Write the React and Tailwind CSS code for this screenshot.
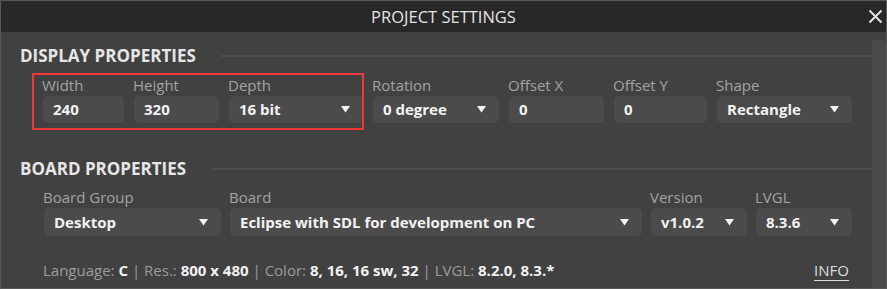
import React from "react";

const font = { fontFamily: '"Open Sans", "Noto Sans", sans-serif' };

function Caret() {
  return (
    <svg width="9" height="7" viewBox="0 0 9 7" className="shrink-0">
      <polygon points="0,0 9,0 4.5,6.5" fill="#f2f2f2" />
    </svg>
  );
}

function Field({ label, value, width, height = "h-[27px]", select }) {
  return (
    <div className={`flex flex-col ${width}`}>
      <span className="-ml-[1px] h-[20px] text-[15px] leading-[20px] text-[#a3a3a3]">{label}</span>
      <div
        className={`mt-px flex ${height} items-center justify-between rounded-[5px] bg-[#4b4b4b] pl-[10px] pr-[13px]`}
      >
        <span className="text-[15px] font-bold text-[#f2f2f2]">{value}</span>
        {select && <Caret />}
      </div>
    </div>
  );
}

function SectionTitle({ children, className = "" }) {
  return (
    <div className={`flex h-[22px] items-center pl-[19px] ${className}`}>
      <span className="text-[17px] font-bold leading-[22px] text-[#e6e6e6]">{children}</span>
      <div className="ml-[25px] h-[2px] flex-1 rounded-full bg-[#4e4e4e]" />
    </div>
  );
}

export default function App() {
  return (
    <div
      style={font}
      className="flex h-[289px] w-[887px] flex-col overflow-hidden border border-[#575757] bg-[#414141]"
    >
      {/* title bar */}
      <div className="grid h-[31px] shrink-0 grid-cols-[1fr_auto_1fr] items-center bg-[#282828]">
        <div />
        <span className="text-[16.5px] leading-[20px] text-[#e4e4e4]">PROJECT SETTINGS</span>
        <div className="flex justify-end pr-[3px]">
          <svg width="15" height="15" viewBox="0 0 15 15">
            <path d="M1.5 1.5 L13.5 13.5 M13.5 1.5 L1.5 13.5" stroke="#e2e2e2" strokeWidth="2" />
          </svg>
        </div>
      </div>

      <div className="flex flex-1">
        <div className="flex-1">
          <SectionTitle className="mt-[13px]">DISPLAY PROPERTIES</SectionTitle>

          <div className="relative mt-[8px] flex gap-[10px] pl-[42px]">
            <div className="pointer-events-none absolute left-[31px] top-[-2px] h-[57px] w-[332px] border-2 border-[#ef3838]" />
            <Field label="Width" value="240" width="w-[81px]" />
            <Field label="Height" value="320" width="w-[85px]" />
            <Field label="Depth" value="16 bit" width="w-[134px]" select />
            <Field label="Rotation" value="0 degree" width="w-[126px]" select />
            <Field label="Offset X" value="0" width="w-[95px]" />
            <Field label="Offset Y" value="0" width="w-[93px]" />
            <Field label="Shape" value="Rectangle" width="w-[135px]" select />
          </div>

          <SectionTitle className="mt-[35px]">BOARD PROPERTIES</SectionTitle>

          <div className="mt-[7px] flex gap-[9px] pl-[43px]">
            <Field label="Board Group" value="Desktop" width="w-[177px]" height="h-[28px]" select />
            <Field
              label="Board"
              value="Eclipse with SDL for development on PC"
              width="w-[412px]"
              height="h-[28px]"
              select
            />
            <Field label="Version" value="v1.0.2" width="w-[96px]" height="h-[28px]" select />
            <Field label="LVGL" value="8.3.6" width="w-[96px]" height="h-[28px]" select />
          </div>

          <div className="mt-[24px] flex items-center justify-between pl-[42px] pr-[23px] text-[15px] leading-[20px]">
            <p className="text-[#9c9c9c]">
              Language: <b className="text-[#f2f2f2]">C</b> | Res.:{" "}
              <b className="text-[#f2f2f2]">800 x 480</b> | Color:{" "}
              <b className="text-[#f2f2f2]">8, 16, 16 sw, 32</b> | LVGL:{" "}
              <b className="text-[#f2f2f2]">8.2.0, 8.3.*</b>
            </p>
            <span className="text-[#dedede] underline decoration-1 underline-offset-[4px]">INFO</span>
          </div>
        </div>

        {/* scrollbar */}
        <div className="flex w-[14px] shrink-0 flex-col pt-[8px]">
          <div className="flex-1 rounded-t-[4px] bg-[#4a4a4a]" />
        </div>
      </div>
    </div>
  );
}
